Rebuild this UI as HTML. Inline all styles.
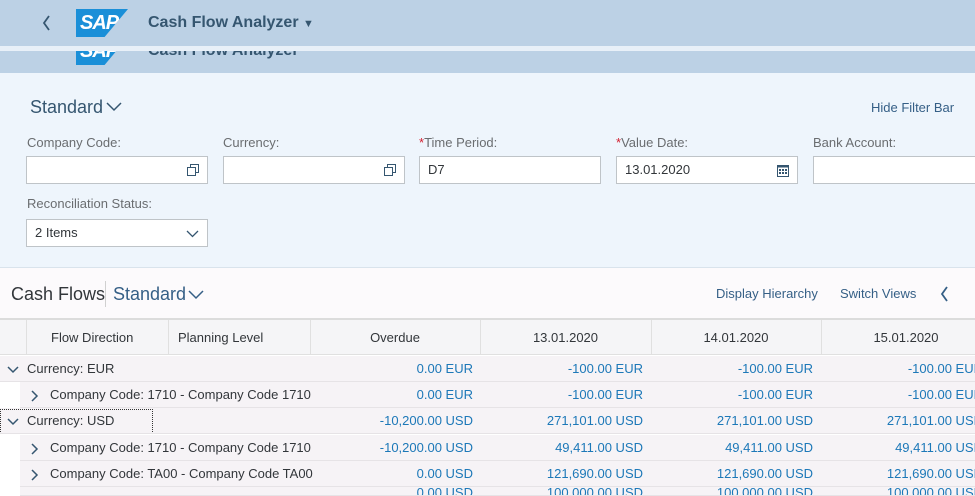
<!DOCTYPE html>
<html><head><meta charset="utf-8"><style>
*{box-sizing:border-box;margin:0;padding:0}
html,body{width:975px;height:496px;overflow:hidden}
body{font-family:"Liberation Sans",Arial,sans-serif;background:#fff;position:relative;font-size:13px;color:#32363a}
.abs{position:absolute}
.hdr{left:0;top:0;width:975px;height:46px;background:#bcd1e5}
.hdr2{left:0;top:51px;width:975px;height:22px;background:#bcd1e5;overflow:hidden}
.sap{width:52px;height:28px;background:#1a8fd8;clip-path:polygon(0 0,100% 0,55% 100%,0 100%);color:#fff;font-weight:bold;font-size:20px;font-style:italic;padding-left:4px;line-height:28px;letter-spacing:-1px}
.title{color:#355670;font-weight:bold;font-size:16px}
.filter{left:0;top:73px;width:975px;height:194px;background:#eef5fc}
.lbl{color:#6a6d70;font-size:13px}
.inp{height:28px;background:#fff;border:1px solid #bfc4c8;font-size:13px;line-height:26px;padding-left:8px;color:#32363a}
.req{color:#d32030}
.tb{left:0;top:267px;width:975px;height:51px;background:#fcfafc;border-top:1px solid #d9e3ec}
.th{top:318px;height:37px;background:#f5f5f7;border-top:2px solid #dcdcdc;border-bottom:1px solid #e0e0e0}
.row{left:0;width:975px;height:26px;background:#f6f3f6;border-bottom:1px solid #e6e3e6;overflow:hidden}
.c{position:absolute;top:0;line-height:25px;font-size:13px;white-space:nowrap}
.n{color:#1c78b8;text-align:right}
.link{color:#355f86}
svg{position:absolute}
</style></head><body>
<div class="abs hdr">
 <svg style="left:42px;top:15px" width="10" height="16"><polyline points="7,1 2,8 7,15" fill="none" stroke="#355670" stroke-width="1.8"/></svg>
 <div class="abs sap" style="left:76px;top:9px">SAP</div>
 <div class="abs title" style="left:148px;top:14px">Cash Flow Analyzer <span style="font-size:11px">▼</span></div>
</div>
<div class="abs" style="left:0;top:46px;width:975px;height:5px;background:#e8f0f8"></div>
<div class="abs hdr2">
 <div class="abs sap" style="left:76px;top:-14px">SAP</div>
 <div class="abs title" style="left:148px;top:-9px">Cash Flow Analyzer</div>
</div>
<div class="abs filter">
 <div class="abs" style="left:30px;top:24px;color:#355670;font-size:18px">Standard</div>
 <svg style="left:106px;top:29px" width="16" height="10"><polyline points="1,1 8,8 15,1" fill="none" stroke="#355670" stroke-width="1.5"/></svg>
 <div class="abs link" style="left:871px;top:27px;font-size:13px">Hide Filter Bar</div>
 <div class="abs lbl" style="left:27px;top:62px">Company Code:</div>
 <div class="abs inp" style="left:26px;top:83px;width:182px"><svg style="right:8px;top:7px" width="12" height="12"><rect x="0.5" y="3.5" width="8" height="8" fill="none" stroke="#355670"/><polyline points="3.5,3 3.5,0.5 11.5,0.5 11.5,8.5 9,8.5" fill="none" stroke="#355670"/></svg></div>
 <div class="abs lbl" style="left:223px;top:62px">Currency:</div>
 <div class="abs inp" style="left:223px;top:83px;width:182px"><svg style="right:8px;top:7px" width="12" height="12"><rect x="0.5" y="3.5" width="8" height="8" fill="none" stroke="#355670"/><polyline points="3.5,3 3.5,0.5 11.5,0.5 11.5,8.5 9,8.5" fill="none" stroke="#355670"/></svg></div>
 <div class="abs lbl" style="left:419px;top:62px"><span class="req">*</span>Time Period:</div>
 <div class="abs inp" style="left:419px;top:83px;width:182px">D7</div>
 <div class="abs lbl" style="left:616px;top:62px"><span class="req">*</span>Value Date:</div>
 <div class="abs inp" style="left:616px;top:83px;width:182px">13.01.2020<svg style="right:8px;top:6px" width="12" height="14"><rect x="0.5" y="2.5" width="11" height="11" fill="none" stroke="#355670"/><rect x="0.5" y="2.5" width="11" height="2" fill="#355670"/><g fill="#355670"><rect x="2" y="6" width="2" height="2"/><rect x="5" y="6" width="2" height="2"/><rect x="8" y="6" width="2" height="2"/><rect x="2" y="9" width="2" height="2"/><rect x="5" y="9" width="2" height="2"/><rect x="8" y="9" width="2" height="2"/></g></svg></div>
 <div class="abs lbl" style="left:813px;top:62px">Bank Account:</div>
 <div class="abs inp" style="left:813px;top:83px;width:170px"></div>
 <div class="abs lbl" style="left:27px;top:123px">Reconciliation Status:</div>
 <div class="abs inp" style="left:26px;top:146px;width:182px">2 Items<svg style="right:8px;top:10px" width="13" height="8"><polyline points="1,1 6.5,6.5 12,1" fill="none" stroke="#355670" stroke-width="1.3"/></svg></div>
</div>
<div class="abs tb">
 <div class="abs" style="left:11px;top:16px;font-size:18px;color:#32363a">Cash Flows</div>
 <div class="abs" style="left:105px;top:13px;width:1px;height:26px;background:#d0d0d0"></div>
 <div class="abs" style="left:113px;top:16px;font-size:18px;color:#355f86">Standard</div>
 <svg style="left:188px;top:22px" width="16" height="10"><polyline points="1,1 8,8 15,1" fill="none" stroke="#355f86" stroke-width="1.5"/></svg>
 <div class="abs link" style="left:716px;top:18px;font-size:13px">Display Hierarchy</div>
 <div class="abs link" style="left:840px;top:18px;font-size:13px">Switch Views</div>
 <svg style="left:940px;top:18px" width="10" height="16"><polyline points="7,1 2,8 7,15" fill="none" stroke="#355f86" stroke-width="1.8"/></svg>
</div>
<div class="abs th" style="left:0;width:975px">
 <div class="abs" style="left:26px;top:0;width:1px;height:35px;background:#e0e0e0"></div>
 <div class="c" style="left:51px;top:5px">Flow Direction</div>
 <div class="abs" style="left:168px;top:0;width:1px;height:35px;background:#e0e0e0"></div>
 <div class="c" style="left:178px;top:5px">Planning Level</div>
 <div class="abs" style="left:310px;top:0;width:1px;height:35px;background:#e0e0e0"></div>
 <div class="c" style="left:310px;width:170px;text-align:center;top:5px">Overdue</div>
 <div class="abs" style="left:480px;top:0;width:1px;height:35px;background:#e0e0e0"></div>
 <div class="c" style="left:480px;width:171px;text-align:center;top:5px">13.01.2020</div>
 <div class="abs" style="left:651px;top:0;width:1px;height:35px;background:#e0e0e0"></div>
 <div class="c" style="left:651px;width:170px;text-align:center;top:5px">14.01.2020</div>
 <div class="abs" style="left:821px;top:0;width:1px;height:35px;background:#e0e0e0"></div>
 <div class="c" style="left:821px;width:170px;text-align:center;top:5px">15.01.2020</div>
</div>
<div class="abs row" style="top:356px"><svg style="left:7px;top:10px" width="12" height="8"><polyline points="1,1 6,6 11,1" fill="none" stroke="#355670" stroke-width="1.5"/></svg><div class="c" style="left:27px">Currency: EUR</div>
<div class="c n" style="left:310px;width:163px">0.00 EUR</div><div class="c n" style="left:480px;width:163px">-100.00 EUR</div><div class="c n" style="left:651px;width:162px">-100.00 EUR</div><div class="c n" style="left:821px;width:162px">-100.00 EUR</div></div>
<div class="abs row" style="top:382px;left:20px;width:955px"><svg style="left:11px;top:8px" width="8" height="12"><polyline points="1,1 6,6 1,11" fill="none" stroke="#355670" stroke-width="1.5"/></svg><div class="c" style="left:30px">Company Code: 1710 - Company Code 1710</div>
<div class="c n" style="left:290px;width:163px">0.00 EUR</div><div class="c n" style="left:460px;width:163px">-100.00 EUR</div><div class="c n" style="left:631px;width:162px">-100.00 EUR</div><div class="c n" style="left:801px;width:162px">-100.00 EUR</div></div>
<div class="abs row" style="top:408px"><svg style="left:7px;top:10px" width="12" height="8"><polyline points="1,1 6,6 11,1" fill="none" stroke="#355670" stroke-width="1.5"/></svg><div class="abs" style="left:0;top:1px;width:153px;height:25px;border:1px dotted #333"></div><div class="c" style="left:27px">Currency: USD</div>
<div class="c n" style="left:310px;width:163px">-10,200.00 USD</div><div class="c n" style="left:480px;width:163px">271,101.00 USD</div><div class="c n" style="left:651px;width:162px">271,101.00 USD</div><div class="c n" style="left:821px;width:162px">271,101.00 USD</div></div>
<div class="abs row" style="top:435px;left:20px;width:955px"><svg style="left:11px;top:8px" width="8" height="12"><polyline points="1,1 6,6 1,11" fill="none" stroke="#355670" stroke-width="1.5"/></svg><div class="c" style="left:30px">Company Code: 1710 - Company Code 1710</div>
<div class="c n" style="left:290px;width:163px">-10,200.00 USD</div><div class="c n" style="left:460px;width:163px">49,411.00 USD</div><div class="c n" style="left:631px;width:162px">49,411.00 USD</div><div class="c n" style="left:801px;width:162px">49,411.00 USD</div></div>
<div class="abs row" style="top:461px;left:20px;width:955px"><svg style="left:11px;top:8px" width="8" height="12"><polyline points="1,1 6,6 1,11" fill="none" stroke="#355670" stroke-width="1.5"/></svg><div class="c" style="left:30px">Company Code: TA00 - Company Code TA00</div>
<div class="c n" style="left:290px;width:163px">0.00 USD</div><div class="c n" style="left:460px;width:163px">121,690.00 USD</div><div class="c n" style="left:631px;width:162px">121,690.00 USD</div><div class="c n" style="left:801px;width:162px">121,690.00 USD</div></div>
<div class="abs row" style="top:487px;left:20px;width:955px;height:9px"><div class="c" style="left:290px;width:163px;top:-7px;color:#1c78b8;text-align:right">0.00 USD</div><div class="c n" style="left:460px;width:163px;top:-7px">100,000.00 USD</div><div class="c n" style="left:631px;width:162px;top:-7px">100,000.00 USD</div><div class="c n" style="left:801px;width:162px;top:-7px">100,000.00 USD</div></div>
</body></html>
